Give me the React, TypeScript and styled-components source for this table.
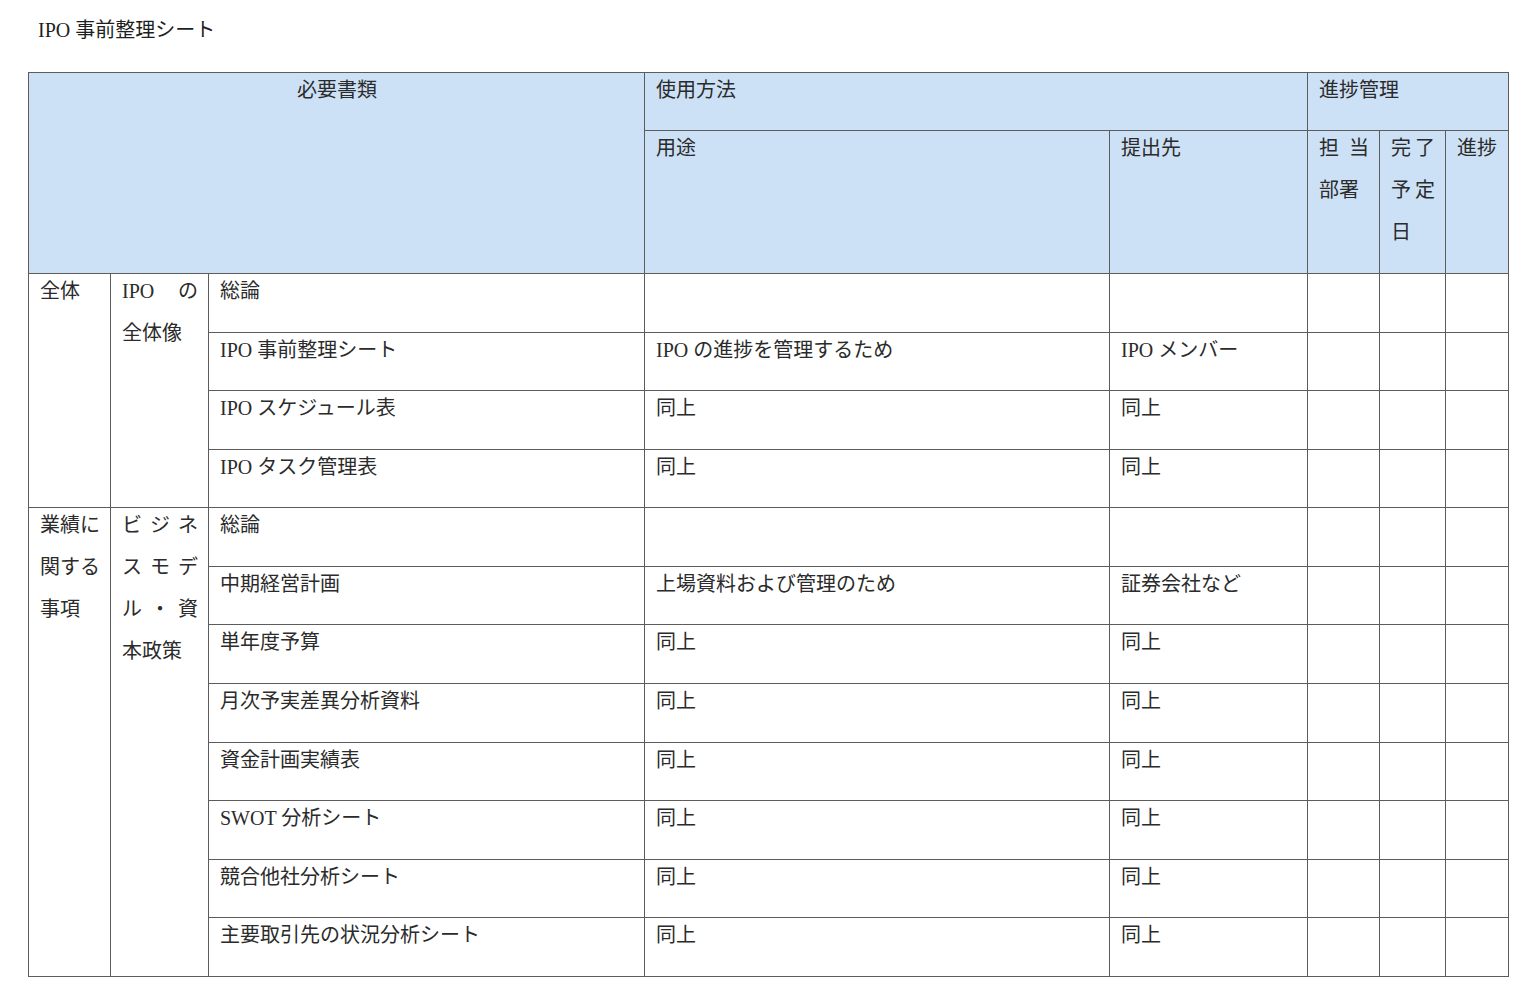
import React from "react";
import styled, { createGlobalStyle } from "styled-components";

const GlobalStyle = createGlobalStyle`
  html, body {
    margin: 0;
    padding: 0;
    background: #ffffff;
  }
  body {
    font-family: "Liberation Serif", "Noto Sans CJK JP", serif;
    color: #2b2b2b;
  }
`;

const Page = styled.div`
  width: 1536px;
  padding: 12px 0 0 28px;
  box-sizing: border-box;
`;

const Title = styled.h1`
  margin: 0 0 24px 10px;
  font-size: 20px;
  font-weight: 400;
  line-height: 36px;
  color: #1f1f1f;
`;

const Sheet = styled.table`
  border-collapse: collapse;
  table-layout: fixed;
  width: 1480px;
  font-size: 20px;
`;

const HeadRow = styled.tr<{ $h: number }>`
  height: ${(p) => p.$h}px;
`;

const BodyRow = styled.tr`
  height: 58.58px;
`;

const Cell = styled.td<{ $head?: boolean; $center?: boolean }>`
  border: 1px solid #5c5c5c;
  background: ${(p) => (p.$head ? "#cde1f6" : "#ffffff")};
  vertical-align: top;
  padding: 0 10px 0 11px;
  line-height: 42px;
  font-weight: 400;
  text-align: ${(p) => (p.$center ? "center" : "justify")};
  text-align-last: ${(p) => (p.$center ? "center" : "left")};
  word-break: break-all;
  overflow: hidden;
`;

const Txt = styled.div`
  margin-top: -4px;
`;

const widths = [82, 98, 436, 465, 198, 72, 66, 63];

type Row = [string, string, string];

const groups: { a: string; b: string; rows: Row[] }[] = [
  {
    a: "全体",
    b: "IPO の全体像",
    rows: [
      ["総論", "", ""],
      ["IPO 事前整理シート", "IPO の進捗を管理するため", "IPO メンバー"],
      ["IPO スケジュール表", "同上", "同上"],
      ["IPO タスク管理表", "同上", "同上"],
    ],
  },
  {
    a: "業績に関する事項",
    b: "ビジネスモデル・資本政策",
    rows: [
      ["総論", "", ""],
      ["中期経営計画", "上場資料および管理のため", "証券会社など"],
      ["単年度予算", "同上", "同上"],
      ["月次予実差異分析資料", "同上", "同上"],
      ["資金計画実績表", "同上", "同上"],
      ["SWOT 分析シート", "同上", "同上"],
      ["競合他社分析シート", "同上", "同上"],
      ["主要取引先の状況分析シート", "同上", "同上"],
    ],
  },
];

const T = ({ children }: { children?: React.ReactNode }) => <Txt>{children}</Txt>;

export default function App() {
  return (
    <>
      <GlobalStyle />
      <Page>
        <Title>IPO 事前整理シート</Title>
        <Sheet>
          <colgroup>
            {widths.map((w, i) => (
              <col key={i} style={{ width: w }} />
            ))}
          </colgroup>
          <thead>
            <HeadRow $h={58}>
              <Cell as="th" $head $center colSpan={3} rowSpan={2}>
                <T>必要書類</T>
              </Cell>
              <Cell as="th" $head colSpan={2}>
                <T>使用方法</T>
              </Cell>
              <Cell as="th" $head colSpan={3}>
                <T>進捗管理</T>
              </Cell>
            </HeadRow>
            <HeadRow $h={143}>
              <Cell as="th" $head>
                <T>用途</T>
              </Cell>
              <Cell as="th" $head>
                <T>提出先</T>
              </Cell>
              <Cell as="th" $head>
                <T>担当部署</T>
              </Cell>
              <Cell as="th" $head>
                <T>完了予定日</T>
              </Cell>
              <Cell as="th" $head>
                <T>進捗</T>
              </Cell>
            </HeadRow>
          </thead>
          <tbody>
            {groups.map((g) =>
              g.rows.map((r, i) => (
                <BodyRow key={g.a + i}>
                  {i === 0 && (
                    <>
                      <Cell rowSpan={g.rows.length}>
                        <T>{g.a}</T>
                      </Cell>
                      <Cell rowSpan={g.rows.length}>
                        <T>{g.b}</T>
                      </Cell>
                    </>
                  )}
                  <Cell>
                    <T>{r[0]}</T>
                  </Cell>
                  <Cell>
                    <T>{r[1]}</T>
                  </Cell>
                  <Cell>
                    <T>{r[2]}</T>
                  </Cell>
                  <Cell />
                  <Cell />
                  <Cell />
                </BodyRow>
              ))
            )}
          </tbody>
        </Sheet>
      </Page>
    </>
  );
}
